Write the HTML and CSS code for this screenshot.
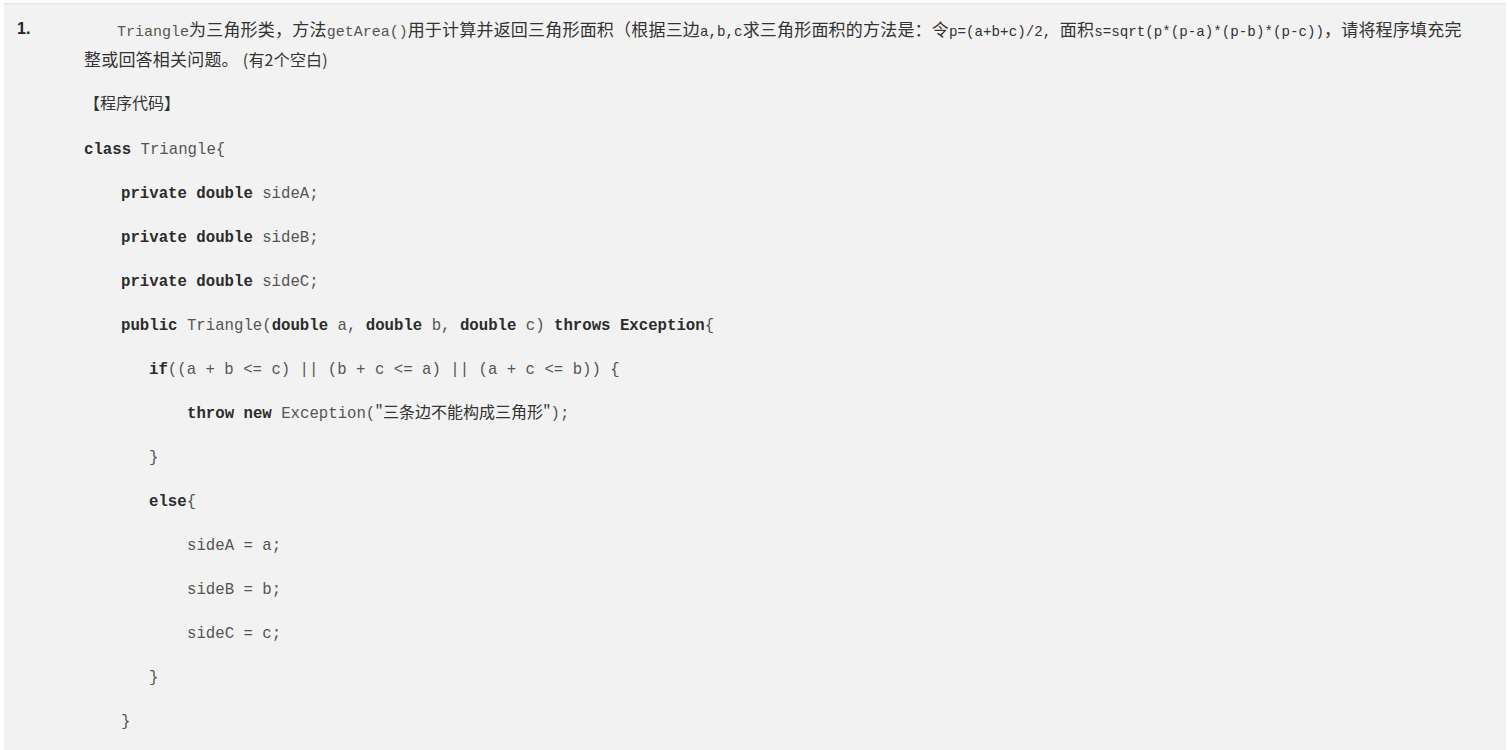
FILE: index.html
```html
<!DOCTYPE html>
<html lang="zh-CN">
<head>
    <meta charset="UTF-8">
    <meta name="viewport" content="width=device-width, initial-scale=1.0">
    <title>程序填空</title>
    <link rel="stylesheet" href="styles.css">
</head>
<body>

    <div class="page">
        <!-- Question card -->
        <div class="question">
            <div class="q-num">1.</div>

            <div class="q-body">
                <p class="q-text"><span class="inline-code">Triangle</span>为三角形类，方法<span class="inline-code">getArea()</span>用于计算并返回三角形面积（根据三边<span class="half">a,b,c</span>求三角形面积的方法是：令<span class="half">p=(a+b+c)/2, </span>面积<span class="half">s=sqrt(p*(p-a)*(p-b)*(p-c))</span>，请将程序填充完整或回答相关问题。 <span class="note">(有2个空白)</span></p>

                <p class="q-label">【程序代码】</p>

                <p class="code"><b>class</b> Triangle{</p>
                <p class="code i1"><b>private double</b> sideA;</p>
                <p class="code i1"><b>private double</b> sideB;</p>
                <p class="code i1"><b>private double</b> sideC;</p>
                <p class="code i1"><b>public</b> Triangle(<b>double</b> a, <b>double</b> b, <b>double</b> c) <b>throws Exception</b>{</p>
                <p class="code i2"><b>if</b>((a + b &lt;= c) || (b + c &lt;= a) || (a + c &lt;= b)) {</p>
                <p class="code i3"><b>throw new</b> Exception(<span class="str">"三条边不能构成三角形"</span>);</p>
                <p class="code i2">}</p>
                <p class="code i2"><b>else</b>{</p>
                <p class="code i3">sideA = a;</p>
                <p class="code i3">sideB = b;</p>
                <p class="code i3">sideC = c;</p>
                <p class="code i2">}</p>
                <p class="code i1">}</p>
            </div>
        </div>
    </div>

</body>
</html>
```

FILE: styles.css
```css
body {
    margin: 0;
    padding: 0;
    background-color: #fff;
    font-family: "Noto Sans CJK SC", "Liberation Sans", sans-serif;
    color: #333;
}

.page {
    padding: 3px 2px 0 4px;
    height: 747px;
    overflow: hidden;
}

/* Question card */
.question {
    display: flex;
    background-color: #f2f2f2;
    border-top: 1px solid #e3e3e3;
    padding: 10px 30px 0 13px;
    min-height: 760px;
}

.q-num {
    flex: 0 0 67px;
    font-family: "Liberation Sans", Arial, sans-serif;
    font-weight: bold;
    font-size: 16px;
    line-height: 30px;
    color: #222;
}

.q-body {
    flex: 1;
    min-width: 0;
}

.q-body p {
    margin: 0 0 14px 0;
    line-height: 30px;
}

.q-text {
    font-size: 17px;
    text-indent: 33px;
    color: #333;
    letter-spacing: 0.2px;
}

.q-text span {
    line-height: 1;
}

.inline-code {
    font-family: "Liberation Mono", monospace;
    font-size: 15px;
    color: #555;
    letter-spacing: 0;
}

.half {
    font-family: "Liberation Mono", monospace;
    font-size: 14.2px;
    color: #333;
    letter-spacing: 0;
}

.note {
    font-family: "Noto Sans CJK SC", sans-serif;
    font-size: 16px;
}

.q-label {
    font-size: 16px;
}

.q-body .q-label {
    margin-top: -1px;
    margin-bottom: 18px;
}

/* Code lines */
.code {
    font-family: "Liberation Mono", "Noto Sans CJK SC", monospace;
    font-size: 15.7px;
    color: #555;
    white-space: pre;
}

.code b {
    color: #2b2b2b;
}

.code .str {
    font-family: "Noto Sans CJK SC", sans-serif;
    font-size: 16px;
    line-height: 1;
    color: #333;
}

.i1 { padding-left: 37px; }
.i2 { padding-left: 65px; }
.i3 { padding-left: 103px; }
```
